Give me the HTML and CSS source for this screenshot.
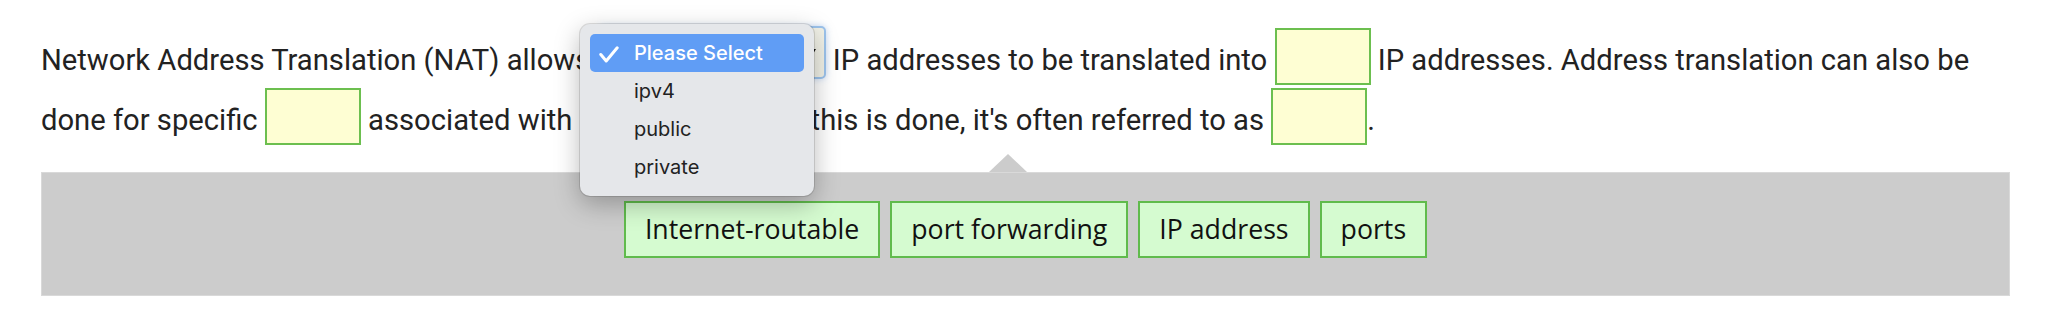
FILE: index.html
```html
<!DOCTYPE html>
<html>
<head>
<meta charset="utf-8">
<link rel="stylesheet" href="styles.css">
</head>
<body>
<div class="page">
  <p class="question">Network Address Translation (NAT) allows <span class="select"><span class="select-arrow"></span></span> IP addresses to be translated into <span class="blank"></span> IP addresses. Address translation can also be done for specific <span class="blank"></span> associated with an <span class="blank"></span>. When this is done, it's often referred to as <span class="blank"></span>.</p>
  <div class="bank">
    <span class="pointer"></span>
    <div class="tiles">
      <span class="tile">Internet-routable</span>
      <span class="tile">port forwarding</span>
      <span class="tile">IP address</span>
      <span class="tile">ports</span>
    </div>
  </div>
  <div class="popup">
    <div class="option selected"><svg class="check" width="20" height="17" viewBox="0 0 20 17"><path d="M1.8 8.5 L7.2 15 L18.2 1.8" fill="none" stroke="#fff" stroke-width="3" stroke-linecap="round" stroke-linejoin="round"/></svg>Please Select</div>
    <div class="option">ipv4</div>
    <div class="option">public</div>
    <div class="option">private</div>
  </div>
</div>
</body>
</html>
```
FILE: styles.css
```css
html, body {
  margin: 0;
  padding: 0;
  background: #fff;
}
.page {
  position: relative;
  width: 1969px;
  padding: 26px 0 0 41px;
}
.question {
  margin: 0;
  font-family: Roboto, "Liberation Sans", sans-serif;
  font-size: 29.2px;
  line-height: 55px;
  color: #222;
}
.blank {
  display: inline-block;
  overflow: hidden;
  width: 92px;
  height: 53px;
  border: 2px solid #6cbf4f;
  background: #fefed3;
  vertical-align: -15px;
}
.select {
  display: inline-block;
  position: relative;
  overflow: hidden;
  box-sizing: border-box;
  width: 228px;
  height: 53px;
  border: 2px solid #9cc3ec;
  border-radius: 5px;
  background: #f2f2e8;
  box-shadow: 0 0 6px rgba(90, 150, 230, 0.35);
  vertical-align: -9px;
}
.select-arrow {
  position: absolute;
  right: 8px;
  top: 21px;
  width: 0;
  height: 0;
  border-left: 3px solid transparent;
  border-right: 3px solid transparent;
  border-top: 5px solid #111;
}
.bank {
  position: relative;
  margin-top: 24px;
  height: 122px;
  background: #cccccc;
  border: 1px solid #d9d9d9;
}
.pointer {
  position: absolute;
  left: 947px;
  top: -19px;
  width: 0;
  height: 0;
  border-left: 19px solid transparent;
  border-right: 19px solid transparent;
  border-bottom: 18px solid #cccccc;
}
.tiles {
  display: flex;
  justify-content: center;
  gap: 10px;
  padding-top: 28px;
}
.tile {
  box-sizing: border-box;
  height: 57px;
  padding: 0 19px;
  border: 2px solid #60bb4c;
  background: #d5fbd0;
  font-family: "Open Sans", "Noto Sans", sans-serif;
  font-size: 26.7px;
  line-height: 52px;
  color: #111;
  white-space: nowrap;
}
.popup {
  position: absolute;
  left: 580px;
  top: 24px;
  width: 234px;
  box-sizing: border-box;
  padding: 10px 10px;
  background: #e5e7ea;
  border-radius: 10px;
  box-shadow: 0 0 0 1px rgba(0, 0, 0, 0.12), 0 8px 26px rgba(0, 0, 0, 0.28);
  font-family: Inter, "Noto Sans", sans-serif;
  font-size: 20px;
  color: #222;
}
.option {
  position: relative;
  height: 38px;
  line-height: 38px;
  padding-left: 44px;
  border-radius: 5px;
}
.option.selected {
  background: #609df5;
  color: #fff;
  font-weight: 500;
}
.check {
  position: absolute;
  left: 9px;
  top: 12px;
}
```
